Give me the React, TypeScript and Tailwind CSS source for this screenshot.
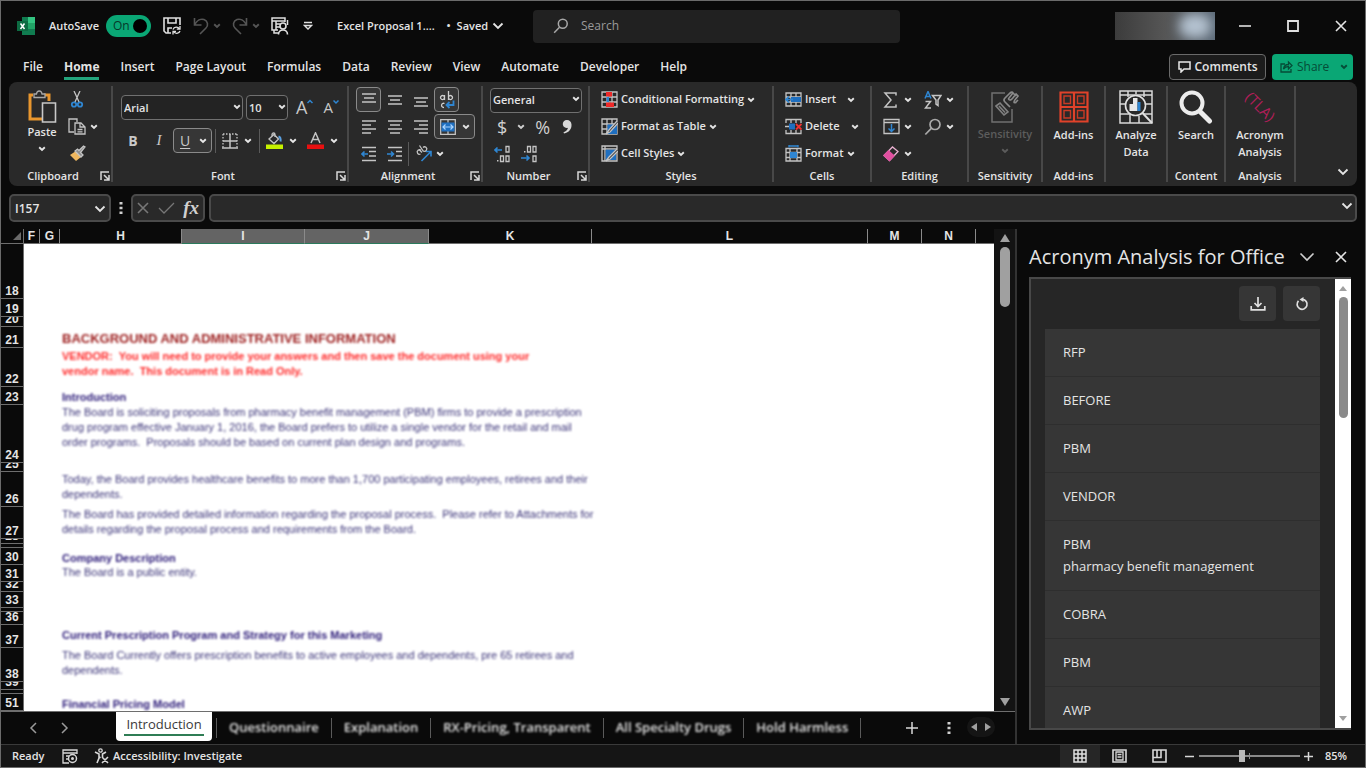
import type { ReactNode } from 'react';

const TABS = ['File', 'Home', 'Insert', 'Page Layout', 'Formulas', 'Data', 'Review', 'View', 'Automate', 'Developer', 'Help'];

const COLUMNS = [
  { name: 'F', width: 'w-[16px]' },
  { name: 'G', width: 'w-[20px]' },
  { name: 'H', width: 'w-[122px]' },
  { name: 'I', width: 'w-[123px]', selected: true },
  { name: 'J', width: 'w-[124px]', selected: true },
  { name: 'K', width: 'w-[163px]' },
  { name: 'L', width: 'w-[276px]' },
  { name: 'M', width: 'w-[54px]' },
  { name: 'N', width: 'w-[54px]' },
  { name: '', width: '' },
];

const TITLE = 'text-[13px] leading-[20px] pt-0.5 font-bold text-[#9c1c1c]';
const WARNING = 'text-[11px] leading-[15px] pt-px font-bold text-[#ff2a2a]';
const HEADING = 'text-[11px] leading-[18px] pt-px font-bold text-[#2b1a78]';
const BODY = 'text-[11px] leading-[15px] font-normal text-[#3a3378]';

type SheetRow = { n: string; height: string; style?: string; lines?: string[] };

const ROWS: SheetRow[] = [
  { n: '18', height: 'h-[55px]' },
  { n: '19', height: 'h-[18px]' },
  { n: '20', height: 'h-[10px]' },
  { n: '21', height: 'h-[21px]', style: TITLE, lines: ['BACKGROUND AND ADMINISTRATIVE INFORMATION'] },
  {
    n: '22',
    height: 'h-[39px]',
    style: WARNING,
    lines: [
      'VENDOR:  You will need to provide your answers and then save the document using your',
      'vendor name.  This document is in Read Only.',
    ],
  },
  { n: '23', height: 'h-[18px]', style: HEADING, lines: ['Introduction'] },
  {
    n: '24',
    height: 'h-[58px]',
    style: BODY,
    lines: [
      'The Board is soliciting proposals from pharmacy benefit management (PBM) firms to provide a prescription',
      'drug program effective January 1, 2016, the Board prefers to utilize a single vendor for the retail and mail',
      'order programs.  Proposals should be based on current plan design and programs.',
    ],
  },
  { n: '25', height: 'h-[9px]' },
  {
    n: '26',
    height: 'h-[35px]',
    style: BODY,
    lines: [
      'Today, the Board provides healthcare benefits to more than 1,700 participating employees, retirees and their',
      'dependents.',
    ],
  },
  {
    n: '27',
    height: 'h-[32px]',
    style: BODY,
    lines: [
      'The Board has provided detailed information regarding the proposal process.  Please refer to Attachments for',
      'details regarding the proposal process and requirements from the Board.',
    ],
  },
  { n: '28', height: 'h-[5px]' },
  { n: '29', height: 'h-[4px]' },
  { n: '30', height: 'h-[17px]', style: HEADING, lines: ['Company Description'] },
  { n: '31', height: 'h-[17px]', style: BODY, lines: ['The Board is a public entity.'] },
  { n: '32', height: 'h-[10px]' },
  { n: '33', height: 'h-[16px]' },
  { n: '34', height: 'h-[4px]' },
  { n: '36', height: 'h-[13px]' },
  { n: '37', height: 'h-[23px]', style: HEADING, lines: ['Current Prescription Program and Strategy for this Marketing'] },
  {
    n: '38',
    height: 'h-[34px]',
    style: BODY,
    lines: [
      'The Board Currently offers prescription benefits to active employees and dependents, pre 65 retirees and',
      'dependents.',
    ],
  },
  { n: '39', height: 'h-[8px]' },
  { n: '40', height: 'h-[4px]' },
  { n: '51', height: 'h-[17px]', style: HEADING, lines: ['Financial Pricing Model'] },
];

const SHEETS = ['Questionnaire', 'Explanation', 'RX-Pricing, Transparent', 'All Specialty Drugs', 'Hold Harmless'];

const ACRONYMS = [
  { term: 'RFP' },
  { term: 'BEFORE' },
  { term: 'PBM' },
  { term: 'VENDOR' },
  { term: 'PBM', meaning: 'pharmacy benefit management' },
  { term: 'COBRA' },
  { term: 'PBM' },
  { term: 'AWP' },
];

function Svg({ w, h = w, className = '', children }: { w: number; h?: number; className?: string; children: ReactNode }) {
  return (
    <svg width={w} height={h} viewBox={`0 0 ${w} ${h}`} fill="none" stroke="#c4c4c4" strokeWidth="1.3" className={`shrink-0 ${className}`} aria-hidden="true">
      {children}
    </svg>
  );
}

function Chevron({ className = '' }: { className?: string }) {
  return (
    <Svg w={8} h={6} className={className}>
      <path d="M1.2 1.3 4 4l2.8-2.7" stroke="currentColor" strokeWidth="1.9" />
    </Svg>
  );
}

function BigChevron({ className = '' }: { className?: string }) {
  return (
    <Svg w={12} h={8} className={className}>
      <path d="m1.5 1.5 4.5 4.5 4.5-4.5" stroke="currentColor" strokeWidth="1.8" />
    </Svg>
  );
}

function Close({ className = '' }: { className?: string }) {
  return (
    <Svg w={12} className={className}>
      <path d="m1 1 10 10M11 1 1 11" stroke="currentColor" strokeWidth="1.6" />
    </Svg>
  );
}

function Dots() {
  return (
    <Svg w={4} h={14}>
      <path d="M0.5 1h3v2.4h-3zM0.5 5.8h3v2.4h-3zM0.5 10.6h3V13h-3z" fill="#d0d0d0" stroke="none" />
    </Svg>
  );
}

function Magnifier({ size = 18 }: { size?: number }) {
  return (
    <svg width={size} height={size} viewBox="0 0 18 18" fill="none" stroke="#a8a8a8" strokeWidth="1.7" className="shrink-0" aria-hidden="true">
      <circle cx="11" cy="6.5" r="5" />
      <path d="m7.3 10.3-6 6.2" />
    </svg>
  );
}

function Launcher({ label }: { label: string }) {
  return (
    <button aria-label={label} className="absolute right-px top-1">
      <Svg w={10}>
        <path d="M1 9V1h8M4 4l4.5 4.5M9 4v5H4" stroke="#d8d8d8" strokeWidth="1.5" />
      </Svg>
    </button>
  );
}

type GroupProps = { label: string; width: string; inset?: string; launcher?: boolean; children: ReactNode };

function Group({ label, width, inset = '', launcher, children }: GroupProps) {
  return (
    <section aria-label={label || undefined} className={`my-1 flex shrink-0 flex-col border-r-2 border-[#484848] ${width}`}>
      <div className={`h-[81px] ${inset}`}>{children}</div>
      <div className={`relative h-[15px] text-center text-[11px] leading-[17px] ${launcher ? 'pr-3.5' : ''}`}>
        {label}
        {launcher && <Launcher label={`${label} settings`} />}
      </div>
    </section>
  );
}

function IconButton({ label, className = '', children }: { label: string; className?: string; children: ReactNode }) {
  return (
    <button aria-label={label} className={`flex items-center justify-center ${className}`}>
      {children}
    </button>
  );
}

function BigButton({ lines, icon }: { lines: string[]; icon: ReactNode }) {
  return (
    <button className="flex w-full flex-col items-center pt-0.5">
      <span className="flex h-[38px] items-center">{icon}</span>
      {lines.map((l) => (
        <span key={l} className="text-[11px] leading-[17px]">
          {l}
        </span>
      ))}
    </button>
  );
}

function Picker({ label, value, className }: { label: string; value: string; className: string }) {
  return (
    <div className={`relative ${className}`}>
      <select aria-label={label} className="h-[25px] w-full appearance-none rounded-[4px] border border-[#707070] bg-[#232323] pl-0.5 text-[11px]">
        <option>{value}</option>
      </select>
      <Chevron className="pointer-events-none absolute right-0.5 top-[10px]" />
    </div>
  );
}

function Lines({ rows }: { rows: [number, number, number][] }) {
  return (
    <Svg w={16}>
      {rows.map(([x1, x2, y]) => (
        <path key={y} d={`M${x1} ${y}H${x2}`} strokeWidth="1.5" />
      ))}
    </Svg>
  );
}

function TableIcon({ children }: { children: ReactNode }) {
  return (
    <Svg w={17}>
      <path d="M1 1h15v15H1zM1 6h15M1 11h15M6 1v15M11 1v15" />
      {children}
    </Svg>
  );
}

function TitleBar() {
  return (
    <header className="flex h-[50px] shrink-0 items-center pl-4 text-[11px]">
      <Svg w={18}>
        <path d="M5 0h13v18H5z" fill="#107c50" stroke="none" />
        <path d="M11 0h7v6h-7z" fill="#33c481" stroke="none" />
        <path d="M11 6h7v6h-7z" fill="#21a366" stroke="none" />
        <path d="M0 4h11v10H0z" fill="#0d6b42" stroke="none" />
        <path d="m3.5 6.5 4 5.5M7.500 6.500l-4 5.500" stroke="#fff" strokeWidth="1.5" />
      </Svg>
      <label className="ml-3.5 flex items-center">
        <span className="w-[57px]">AutoSave</span>
        <input type="checkbox" defaultChecked className="peer sr-only" />
        <span className="flex h-[22px] w-[45px] items-center justify-between rounded-full bg-[#0aa775] pl-[7px] pr-1 text-[12px] font-normal text-[#06382a]">
          On
          <span className="h-[14px] w-[14px] rounded-full bg-black" />
        </span>
      </label>
      <IconButton label="Save" className="ml-3">
        <Svg w={18}>
          <path d="M8 16H3l-2-2V1h16v7M5 1v5h8V1M5 16v-5h4" stroke="#e0e0e0" strokeWidth="1.6" />
          <path d="M10 12.5c1-3 5-3 6.5-.5M17 9v3.200h-3.200M17 14c-1 3-5 3-6.500.5M10 17.500v-3h3" stroke="#e0e0e0" />
        </Svg>
      </IconButton>
      <IconButton label="Undo" className="ml-3 gap-1 text-[#555]">
        <Svg w={16} h={18}>
          <path d="M1.500 1v7h7M1.500 8C4 3 8 1.500 11 2.500c4 1.500 4.500 6 2 8.500l-6 6" stroke="#555" strokeWidth="1.600" />
        </Svg>
        <Chevron />
      </IconButton>
      <IconButton label="Redo" className="ml-[11px] gap-1 text-[#555]">
        <Svg w={16} h={18}>
          <path d="M14.500 1v7h-7M14.500 8C12 3 8 1.500 5 2.500c-4 1.500-4.500 6-2 8.500l6 6" stroke="#555" strokeWidth="1.600" />
        </Svg>
        <Chevron />
      </IconButton>
      <IconButton label="Print preview" className="ml-[11px]">
        <Svg w={18}>
          <path d="M7 13H1V1h13v4M3 13v3h5M1 4h13M5 4v9M5 7h4M5 10h4M16.500 8V3" stroke="#e0e0e0" strokeWidth="1.5" />
          <circle cx="12" cy="9" r="3" fill="#0a0a0a" stroke="#e0e0e0" strokeWidth="1.600" />
          <path d="M7.500 17.500c0-6 9-6 9 0" fill="#0a0a0a" stroke="#e0e0e0" strokeWidth="1.600" />
        </Svg>
      </IconButton>
      <IconButton label="Customize toolbar" className="ml-3.5">
        <Svg w={10}>
          <path d="M1 1.5h8" stroke="#e0e0e0" strokeWidth="1.5" />
          <path d="M1.5 4.5h7L5 8z" stroke="#e0e0e0" />
        </Svg>
      </IconButton>
      <button className="ml-6 flex w-[196px] items-center whitespace-pre">
        Excel Proposal 1....{'  '}
        <span className="px-1.5">•</span>Saved
        <BigChevron className="ml-1" />
      </button>
      <label className="flex h-[33px] w-[367px] items-center gap-3 rounded-[4px] bg-[#212121] pl-5">
        <Magnifier size={16} />
        <input type="search" aria-label="Search" placeholder="Search" className="w-full bg-transparent text-[12px] font-medium outline-none placeholder:text-[#9a9a9a]" />
      </label>
      <div className="ml-auto flex h-7 w-[100px] items-center justify-end overflow-hidden bg-linear-to-r from-[#3c3c3c] via-[#565656] to-[#5c6a78]">
        <div className="h-6 w-8 mr-1 rounded-full bg-[#b4c2d0] blur-[6px]" />
      </div>
      <div className="flex w-[150px] items-center justify-between pl-6 pr-[18px]">
        <IconButton label="Minimize">
          <Svg w={12}>
            <path d="M0 6h12" stroke="#e0e0e0" strokeWidth="1.600" />
          </Svg>
        </IconButton>
        <IconButton label="Maximize">
          <Svg w={12}>
            <path d="M1 1h10v10H1z" stroke="#e0e0e0" strokeWidth="1.800" />
          </Svg>
        </IconButton>
        <IconButton label="Close">
          <Close />
        </IconButton>
      </div>
    </header>
  );
}

function RibbonTabs() {
  return (
    <nav className="flex h-[31px] shrink-0 items-center pl-[22px] pr-3 text-[12px]">
      <div className="flex gap-[21px]">
        {TABS.map((tab) => (
          <a key={tab} href="#" className={`border-b-[3px] pt-1 leading-[20px] ${tab === 'Home' ? 'border-[#23a47c] font-bold' : 'border-transparent'}`}>
            {tab}
          </a>
        ))}
      </div>
      <button className="ml-auto flex h-[26px] w-[97px] items-center justify-center gap-1 rounded-[4px] border border-[#6a6a6a] bg-[#1c1c1c]">
        <Svg w={13} h={12}>
          <path d="M1 1h11v7H6l-3 3V8H1z" stroke="#e8e8e8" strokeWidth="1.5" />
        </Svg>
        Comments
      </button>
      <button className="ml-1.5 flex h-[26px] w-[81px] items-center gap-1 rounded-[4px] bg-[#0aa775] pl-2 font-normal text-[#064c37]">
        <Svg w={13}>
          <path d="M5 4H1v8h10V9M3.500 9C4 5.500 6 4.500 8.500 4.500V2L12 5.500 8.500 9V6.500C6.500 6.500 5 7 3.500 9z" stroke="#064c37" />
        </Svg>
        Share
        <Chevron className="ml-auto mr-[5px]" />
      </button>
    </nav>
  );
}

function ClipboardGroup() {
  return (
    <Group label="Clipboard" width="w-[104px]" launcher>
      <div className="flex">
        <button className="ml-[17px] flex w-8 flex-col items-center pt-1 text-[11px]">
          <Svg w={30} h={34}>
            <path d="M6 5H3v24h12M17 5h5v6" stroke="#e8962e" strokeWidth="3" />
            <path d="M7 7.500V4h2.500c.5-4 5-4 5.500 0h3v3.500z" fill="#292929" stroke="#a8a8a8" />
            <path d="M15.500 13h13v19h-13z" fill="#292929" stroke="#c8c8c8" strokeWidth="1.600" />
          </Svg>
          <span className="leading-[16px]">Paste</span>
          <Chevron className="mt-1.5" />
        </button>
        <div className="ml-2.5 flex flex-col items-start">
          <IconButton label="Cut" className="h-[27px] w-[18px]">
            <Svg w={14} h={17}>
              <path d="m4 0 5.500 12M10 0 4.500 12" />
              <circle cx="4" cy="13.500" r="2.200" stroke="#2f86d2" strokeWidth="1.800" />
              <circle cx="10" cy="13.500" r="2.200" stroke="#2f86d2" strokeWidth="1.800" />
            </Svg>
          </IconButton>
          <IconButton label="Copy" className="h-[27px] gap-1">
            <Svg w={18} h={17}>
              <path d="M6 14H1V1h8v3M7 5h6l4 4v7H7zM12 5v4h5M9.500 11.500h5M9.500 13.800h5" />
            </Svg>
            <Chevron />
          </IconButton>
          <IconButton label="Format painter" className="h-[27px] w-[18px]">
            <Svg w={17}>
              <path d="M1 10 7 6l5 6-5 4z" fill="#f0b860" stroke="none" />
              <path d="m6 6 6 6 2-2-2.500-2.500L16 2l-1.500-1L10 5.500 8.500 4z" fill="#8a8a8a" />
            </Svg>
          </IconButton>
        </div>
      </div>
    </Group>
  );
}

function FontGroup() {
  return (
    <Group label="Font" width="w-[236px]" inset="pl-2" launcher>
      <div className="flex h-[42px] items-center pr-2">
        <Picker label="Font" value="Arial" className="w-[122px]" />
        <Picker label="Font size" value="10" className="ml-[3px] w-[42px]" />
        <IconButton label="Grow font" className="ml-2 text-[18px] font-normal leading-none text-[#c8c8c8]">
          A
          <Svg w={6} h={18}>
            <path d="m.5 5 2.500-2.500L5.500 5" stroke="#2f86d2" strokeWidth="1.500" />
          </Svg>
        </IconButton>
        <IconButton label="Shrink font" className="ml-2.5 text-[15px] font-normal leading-none text-[#c8c8c8]">
          A
          <Svg w={6} h={18}>
            <path d="m.5 2.500 2.500 2.500 2.500-2.500" stroke="#2f86d2" strokeWidth="1.500" />
          </Svg>
        </IconButton>
      </div>
      <div className="flex h-[25px] items-center text-[#c8c8c8]">
        <button aria-label="Bold" className="w-6 text-[14px] font-bold">
          B
        </button>
        <button aria-label="Italic" className="w-7 font-['Liberation_Serif',serif] text-[15px] font-normal italic">
          I
        </button>
        <button aria-label="Underline" className="flex h-[25px] w-[39px] items-center justify-between rounded-[4px] border border-[#8a8a8a] bg-[#363636] pl-1.5 pr-1 text-[14px] font-normal">
          <span className="underline underline-offset-2">U</span>
          <Chevron className="text-[#e8e8e8]" />
        </button>
        <div className="ml-[3px] h-6 w-px bg-[#5a5a5a]" />
        <IconButton label="Borders" className="ml-1.5 gap-1.5">
          <Svg w={16}>
            <path d="M1 1h14M1 1v14M15 1v14" strokeDasharray="1.500 1.500" />
            <path d="M1 8h14M8 1v14M0 15h16" strokeWidth="1.500" />
          </Svg>
          <Chevron className="text-[#e8e8e8]" />
        </IconButton>
        <div className="ml-[7px] h-6 w-px bg-[#5a5a5a]" />
        <IconButton label="Fill color" className="ml-1.5 gap-1.5">
          <Svg w={17}>
            <path d="m3 7 5-4.500L12.500 7 8 11.500zM6 5V2.500C6 .5 9 .5 9 2.500V5" />
            <path d="M12.500 4.500c1.500.5 2.500 2 2 5" stroke="#5aa0e0" strokeWidth="2" />
            <path d="M0 12.500h17V17H0z" fill="#c6f000" stroke="none" />
          </Svg>
          <Chevron className="text-[#e8e8e8]" />
        </IconButton>
        <IconButton label="Font color" className="ml-2.5 gap-1.5">
          <Svg w={17}>
            <path d="M4 11 8.500.8 13 11M5.500 7.500h6" strokeWidth="1.500" />
            <path d="M0 12.500h17V17H0z" fill="#e81010" stroke="none" />
          </Svg>
          <Chevron className="text-[#e8e8e8]" />
        </IconButton>
      </div>
    </Group>
  );
}

function AlignmentGroup() {
  return (
    <Group label="Alignment" width="w-[134px]" inset="pl-[7px]" launcher>
      <div className="flex h-[27px] items-center">
        <IconButton label="Top align" className="h-[25px] w-[25px] rounded-[4px] border border-[#8a8a8a] bg-[#363636]">
          <Lines rows={[[1, 15, 2], [3, 13, 6], [1, 15, 10]]} />
        </IconButton>
        <IconButton label="Middle align" className="h-[27px] w-[27px]">
          <Lines rows={[[1, 15, 4], [3, 13, 8], [1, 15, 12]]} />
        </IconButton>
        <IconButton label="Bottom align" className="h-[27px] w-[26px]">
          <Lines rows={[[1, 15, 6], [3, 13, 10], [1, 15, 14]]} />
        </IconButton>
        <IconButton label="Wrap text" className="h-[25px] w-[25px] rounded-[4px] border border-[#8a8a8a] bg-[#363636]">
          <Svg w={18}>
            <path d="M6.500 4v5M6.500 6.500a2 2 0 1 0 0 .1M10.500 0v9M10.500 6.500a2 2 0 1 1 0 .1M6.500 12.500c-3-1.500-4.500 4-.5 4" stroke="#d0d0d0" />
            <path d="M15.500 9.500v4.500H9M11.500 11 8.500 14l3 3" stroke="#2f86d2" strokeWidth="1.800" />
          </Svg>
        </IconButton>
      </div>
      <div className="flex h-[27px] items-center">
        <IconButton label="Align left" className="w-[25px]">
          <Lines rows={[[1, 15, 2], [1, 10, 6], [1, 15, 10], [1, 10, 14]]} />
        </IconButton>
        <IconButton label="Center" className="w-[27px]">
          <Lines rows={[[1, 15, 2], [3, 13, 6], [1, 15, 10], [3, 13, 14]]} />
        </IconButton>
        <IconButton label="Align right" className="w-[26px]">
          <Lines rows={[[1, 15, 2], [6, 15, 6], [1, 15, 10], [6, 15, 14]]} />
        </IconButton>
        <IconButton label="Merge and center" className="h-[25px] w-[41px] gap-1.5 rounded-[4px] border border-[#8a8a8a] bg-[#363636]">
          <Svg w={16}>
            <path d="M.7.700h14.600v14.600H.700zM8 .7v3M8 12v3" />
            <path d="M1.500 3.500h13v9h-13z" fill="#1f6fc0" stroke="none" />
            <path d="M3 8h10M5.500 5.500 3 8l2.500 2.500M10.500 5.500 13 8l-2.500 2.500" stroke="#a8d4ff" strokeWidth="1.200" />
          </Svg>
          <Chevron />
        </IconButton>
      </div>
      <div className="flex h-[27px] items-center">
        <IconButton label="Decrease indent" className="w-[25px]">
          <Svg w={16}>
            <path d="M1 1.500h14M8 5.500h7M8 10h7M1 14.500h14" strokeWidth="1.500" />
            <path d="M7 8H1M3.500 5.500 1 8l2.500 2.500" stroke="#2f86d2" strokeWidth="1.600" />
          </Svg>
        </IconButton>
        <IconButton label="Increase indent" className="w-[27px]">
          <Svg w={16}>
            <path d="M1 1.500h14M9 5.500h6M9 10h6M1 14.500h14" strokeWidth="1.500" />
            <path d="M0 8h6.500M4 5.500 6.500 8 4 10.500" stroke="#2f86d2" strokeWidth="1.600" />
          </Svg>
        </IconButton>
        <div className="h-6 w-px bg-[#5a5a5a]" />
        <IconButton label="Orientation" className="ml-1.5 gap-1">
          <Svg w={17}>
            <path d="M7 7.500 4 4.500M5.500 9a2.200 2.200 0 1 1 .5-3.500M8.500 6.500 4.500.5M8.500 6a2.200 2.200 0 1 0-.5-3.500" stroke="#c4c4c4" />
            <path d="M6.500 16 15.500 7M11 6.500h5v5" stroke="#2f86d2" strokeWidth="1.600" />
          </Svg>
          <Chevron />
        </IconButton>
      </div>
    </Group>
  );
}

function NumberGroup() {
  return (
    <Group label="Number" width="w-[107px]" inset="pl-[7px]" launcher>
      <div className="flex h-[27px] items-center">
        <Picker label="Number format" value="General" className="w-[92px]" />
      </div>
      <div className="flex h-[27px] items-center text-[18px] font-normal leading-none text-[#d0d0d0]">
        <IconButton label="Accounting format" className="ml-[7px] gap-2.5">
          $<Chevron />
        </IconButton>
        <button aria-label="Percent style" className="ml-2.5">
          %
        </button>
        <IconButton label="Comma style" className="ml-3">
          <Svg w={11} h={15}>
            <path d="M5 1a4 4 0 1 0 1 7.800C5.500 11 4 12.500 1.500 13.200l.5 1.300C7 13.500 9.800 10 9.500 5.500 9.300 2.500 7.500 1 5 1z" fill="#d8d8d8" stroke="none" />
          </Svg>
        </IconButton>
      </div>
      <div className="flex h-[27px] items-center gap-2.5 pl-1">
        <IconButton label="Increase decimal">
          <Svg w={17} h={18}>
            <path d="M8 5H1M3.500 2.500 1 5l2.500 2.500" stroke="#2f86d2" strokeWidth="1.600" />
            <path d="M12 1.500h3V7h-3zM6.500 11h3v5.500h-3zM12 11h3v5.500h-3z" />
            <path d="M3 15h1.500v1.500H3z" fill="#c4c4c4" stroke="none" />
          </Svg>
        </IconButton>
        <IconButton label="Decrease decimal">
          <Svg w={17} h={18}>
            <path d="M0 13h8M5.500 10.500 8 13l-2.500 2.500" stroke="#2f86d2" strokeWidth="1.600" />
            <path d="M6.500 1.500h3V7h-3zM12 1.500h3V7h-3zM12 11h3v5.500h-3z" />
            <path d="M3 6h1.500v1.500H3z" fill="#c4c4c4" stroke="none" />
          </Svg>
        </IconButton>
      </div>
    </Group>
  );
}

function StylesGroup() {
  return (
    <Group label="Styles" width="w-[184px]" inset="pl-[11px]">
      <button className="flex h-[27px] items-center gap-[3px] text-[11px]">
        <TableIcon>
          <path d="M5 1h6v4.500H5zM5 11.500h8V16H5z" fill="#ee2a2a" stroke="none" />
          <path d="M5.500 6H8v5H5.500z" fill="#2f86d2" stroke="none" />
        </TableIcon>
        Conditional Formatting
        <Chevron />
      </button>
      <button className="flex h-[27px] items-center gap-[3px] text-[11px]">
        <TableIcon>
          <path d="M6.500 6.500H16V16H6.500z" fill="#1f6fc0" stroke="none" />
          <path d="m16 3-8 9-3 4 4-2 8-9" fill="#292929" />
        </TableIcon>
        Format as Table
        <Chevron />
      </button>
      <button className="flex h-[27px] items-center gap-[3px] text-[11px]">
        <Svg w={17}>
          <path d="M1 1h15v15H1zM1 4h15M4 1v15" />
          <path d="M4.700 4.700H15V15H4.700z" fill="#1f6fc0" stroke="none" />
          <path d="m16 4-8 8-3 4 4-2 8-8" fill="#292929" />
        </Svg>
        Cell Styles
        <Chevron />
      </button>
    </Group>
  );
}

function CellsGroup() {
  return (
    <Group label="Cells" width="w-[98px]" inset="pl-[11px]">
      <button className="flex h-[27px] w-[70px] items-center gap-[3px] text-[11px]">
        <Svg w={17}>
          <path d="M1 2h15v13H1zM1 6h15M1 11h15M6 2v13M11 2v13" />
          <path d="M6 6h10v5H6z" fill="#1f6fc0" stroke="none" />
          <path d="M8 8.500H1M4 5.500l-3 3 3 3" stroke="#2f86d2" strokeWidth="1.600" />
        </Svg>
        Insert
        <Chevron className="ml-auto" />
      </button>
      <button className="flex h-[27px] w-[74px] items-center gap-[3px] text-[11px]">
        <Svg w={17}>
          <path d="M1 5V1.500h15V5M6 1.500V5M11 1.500V5M1 12v3.500h15V12M6 15.500V12M11 15.500V12M0 8.500h4" />
          <path d="M4 5.500h6v6H4z" fill="#1f6fc0" stroke="none" />
          <path d="m11 6 5.500 5.500M16.500 6 11 11.500" stroke="#ee3030" strokeWidth="1.800" />
        </Svg>
        Delete
        <Chevron className="ml-auto" />
      </button>
      <button className="flex h-[27px] w-[70px] items-center gap-[3px] text-[11px]">
        <Svg w={17}>
          <path d="M1 3.500h15V16H1zM1 7.500h15M1 12.500h15M5 3.500V16M12 3.500V16" />
          <path d="M5 7h7v6H5z" fill="#2f86d2" stroke="none" />
          <path d="M4 1h9M4 0v2.500M13 0v2.500" stroke="#2f86d2" />
        </Svg>
        Format
        <Chevron className="ml-auto" />
      </button>
    </Group>
  );
}

function EditingGroup() {
  return (
    <Group label="Editing" width="w-[97px]" inset="pl-[11px]">
      <div className="flex h-[27px] items-center gap-3">
        <IconButton label="AutoSum" className="gap-1.5">
          <Svg w={15} h={16}>
            <path d="M13 3.500V1H2l6 7-6 7h11v-2.500" strokeWidth="1.500" />
          </Svg>
          <Chevron />
        </IconButton>
        <IconButton label="Sort and filter" className="gap-1">
          <Svg w={18}>
            <path d="m1 7.500 3-7 3 7M2 5.500h4" stroke="#2f86d2" strokeWidth="1.500" />
            <path d="M1.500 10.500h5L1.500 17H7" strokeWidth="1.500" />
            <path d="M8.500 4.500H17L14 9v5.500l-2-1.500V9z" strokeWidth="1.500" />
          </Svg>
          <Chevron />
        </IconButton>
      </div>
      <div className="flex h-[27px] items-center gap-3">
        <IconButton label="Fill" className="gap-1">
          <Svg w={17}>
            <path d="M1 1.500h15v14H1zM1 4.500h15" />
            <path d="M8.500 6v7M5.500 10.500l3 3 3-3" stroke="#2f86d2" strokeWidth="1.500" />
          </Svg>
          <Chevron />
        </IconButton>
        <IconButton label="Find and select" className="gap-1">
          <Magnifier size={18} />
          <Chevron />
        </IconButton>
      </div>
      <div className="flex h-[27px] items-center">
        <IconButton label="Clear" className="gap-1">
          <Svg w={17}>
            <path d="M1 10.500 9.500 2l5.500 4.500L6.500 15.500z" stroke="#e8b0d0" />
            <path d="m1 10.500 4.500-4.700 5.500 5-4.500 4.700z" fill="#e050a0" stroke="#e050a0" />
          </Svg>
          <Chevron />
        </IconButton>
      </div>
    </Group>
  );
}

function Ribbon() {
  return (
    <div className="mx-2 flex h-[104px] shrink-0 rounded-[8px] bg-[#292929]">
      <ClipboardGroup />
      <FontGroup />
      <AlignmentGroup />
      <NumberGroup />
      <StylesGroup />
      <CellsGroup />
      <EditingGroup />
      <Group label="Sensitivity" width="w-[74px]">
        <button disabled className="flex w-full flex-col items-center pt-0.5 text-[11px] text-[#5c5c5c]">
          <Svg w={30} h={38}>
            <path d="M15 5H2v29h20V21" stroke="#707070" strokeWidth="1.500" />
            <path d="m6 18 4-3 8 9-4 3zM9 18l6 6.500" stroke="#808080" strokeWidth="1.600" />
            <path d="M20 19l-5-5c-2-2-1-3 0-4l4-4c1-1 3-3 4-1l-4 5c-1 1 0 2 1 2 2 0 4-4 6-6l2 2c-2 3-4 4-4 6 0 1 2 1 2 0l2-2M22 4l4 4" stroke="#8a8a8a" strokeWidth="1.700" />
          </Svg>
          <span className="leading-[16px]">Sensitivity</span>
          <Chevron className="mt-1.5" />
        </button>
      </Group>
      <Group label="Add-ins" width="w-[63px]">
        <BigButton
          lines={['Add-ins']}
          icon={
            <Svg w={30} h={32}>
              <path d="M1.500 1.500h27v29h-27zM15 1.500v29M1.500 16h27" stroke="#e0422a" strokeWidth="2.200" />
              <path d="M5 5h6.500v7.500H5zM18.500 5H25v7.500h-6.500zM5 19.500h6.500V27H5zM18.500 19.500H25V27h-6.500z" stroke="#c83a25" strokeWidth="1.400" />
            </Svg>
          }
        />
      </Group>
      <Group label="" width="w-[62px]">
        <BigButton
          lines={['Analyze', 'Data']}
          icon={
            <Svg w={34}>
              <path d="M1 1h32v32H1zM1 5h32M1 14h7M26 14h7M1 24h10M24 24h9M9 1v6M17 1v3M25 1v6M11 25v8M20 26v7" stroke="#d8d8d8" strokeWidth="1.500" />
              <circle cx="16.500" cy="15.500" r="10" fill="#292929" stroke="#e0e0e0" strokeWidth="1.600" />
              <path d="M10.500 14H14v7h-3.500zM14 8h4.500v13H14z" fill="#e8e8e8" stroke="none" />
              <path d="M18.500 12h3v9h-3z" fill="#2f86d2" stroke="none" />
              <path d="m23.500 23 9.500 10" stroke="#e0e0e0" strokeWidth="2" />
            </Svg>
          }
        />
      </Group>
      <Group label="Content" width="w-[58px]">
        <BigButton
          lines={['Search']}
          icon={
            <Svg w={34}>
              <circle cx="13" cy="13" r="10.500" stroke="#ececec" strokeWidth="4" />
              <path d="m21.500 22 9 9" stroke="#ececec" strokeWidth="5" strokeLinecap="round" />
            </Svg>
          }
        />
      </Group>
      <Group label="Analysis" width="w-[70px]">
        <BigButton
          lines={['Acronym', 'Analysis']}
          icon={
            <Svg w={36} className="overflow-visible">
              <text x="18" y="23" textAnchor="middle" transform="rotate(45 18 18)" fontSize="15" fontWeight="500" fill="#b01e58" stroke="none">
                (TLA)
              </text>
            </Svg>
          }
        />
      </Group>
      <IconButton label="Collapse ribbon" className="mb-2.5 ml-auto mr-2 self-end">
        <BigChevron />
      </IconButton>
    </div>
  );
}

function FormulaBar() {
  return (
    <div className="flex h-[43px] shrink-0 items-start px-2 pt-2">
      <div className="relative w-[102px]">
        <input aria-label="Name box" defaultValue="I157" className="h-7 w-full rounded-[5px] border-2 border-[#4a4a4a] bg-[#292929] pl-1 text-[12px]" />
        <BigChevron className="pointer-events-none absolute right-[5px] top-[11px]" />
      </div>
      <span className="flex h-7 w-5 items-center justify-center">
        <Dots />
      </span>
      <div className="flex h-7 w-[74px] items-center justify-between rounded-[5px] border-2 border-[#4a4a4a] bg-[#292929] px-1">
        <IconButton label="Cancel">
          <Close className="text-[#777]" />
        </IconButton>
        <IconButton label="Enter">
          <Svg w={17} h={12}>
            <path d="m1 6 5 5L16 1" stroke="#777" />
          </Svg>
        </IconButton>
        <button aria-label="Insert function" className="font-['Liberation_Serif',serif] text-[19px] font-bold italic leading-[22px] text-[#d0d0d0]">
          fx
        </button>
      </div>
      <div className="relative ml-1 flex-1">
        <input aria-label="Formula" className="h-7 w-full rounded-[5px] border-2 border-[#4a4a4a] bg-[#292929] px-2 text-[12px]" />
        <BigChevron className="pointer-events-none absolute right-1 top-2" />
      </div>
    </div>
  );
}

function Grid() {
  return (
    <div className="min-w-0 flex-1 overflow-hidden">
      <table className="w-full table-fixed border-separate border-spacing-0 font-['Liberation_Sans',Arial,sans-serif]">
        <thead>
          <tr className="text-[12px] leading-[14px]">
            <th className="h-[15px] w-[23px] border-b border-r border-[#6e6e6e] p-0">
              <Svg w={8} className="ml-auto mr-0.5">
                <path d="M8 0v8H0z" fill="#6a6a6a" stroke="none" />
              </Svg>
            </th>
            {COLUMNS.map((c, i) => (
              <th
                key={c.name}
                scope="col"
                className={`border-b p-0 ${c.width} ${c.selected ? 'border-b-[#2b7a5c] bg-[#646464]' : 'border-b-[#6e6e6e]'} ${i < COLUMNS.length - 1 ? 'border-r border-r-[#8a8a8a]' : ''}`}
              >
                {c.name}
              </th>
            ))}
          </tr>
        </thead>
        <tbody>
          {ROWS.map((row) => (
            <tr key={row.n}>
              <th scope="row" className="border-r border-[#6e6e6e] p-0">
                <div className={`flex items-end justify-center overflow-hidden border-b border-[#6e6e6e] text-[12px] leading-[14px] ${row.height}`}>
                  {row.height !== 'h-[4px]' && row.n}
                </div>
              </th>
              <td colSpan={COLUMNS.length} className="bg-white p-0">
                <div className={`whitespace-pre pl-[38px] ${row.height}`}>
                  <div className={`blur-[1px] ${row.style ?? ''}`}>
                    {row.lines?.map((line) => (
                      <div key={line}>{line}</div>
                    ))}
                  </div>
                </div>
              </td>
            </tr>
          ))}
        </tbody>
      </table>
    </div>
  );
}

function Arrow({ d, className = '' }: { d: string; className?: string }) {
  return (
    <Svg w={10} className={className}>
      <path d={d} fill="#a0a0a0" stroke="none" />
    </Svg>
  );
}

function SheetTabs() {
  return (
    <div className="flex h-[33px] shrink-0 items-start border-t border-[#6e6e6e] text-[13px]">
      <IconButton label="Previous sheet" className="ml-7 h-[31px]">
        <Svg w={8} h={12}>
          <path d="M7 1 2 6l5 5" stroke="#9a9a9a" strokeWidth="1.500" />
        </Svg>
      </IconButton>
      <IconButton label="Next sheet" className="ml-6 h-[31px]">
        <Svg w={8} h={12}>
          <path d="m1 1 5 5-5 5" stroke="#9a9a9a" strokeWidth="1.500" />
        </Svg>
      </IconButton>
      <button className="ml-[47px] h-[29px] w-[96px] rounded-b-[4px] bg-white pb-1 font-normal text-[#3a3a3a]">
        <span className="mx-2 block border-b-2 border-[#2f7d55] leading-[20px]">Introduction</span>
      </button>
      <div className="ml-1 mt-1.5 h-5 w-px bg-[#5a5a5a]" />
      {SHEETS.map((name) => (
        <button key={name} className="mt-1.5 h-5 whitespace-nowrap border-r border-[#5a5a5a] px-3">
          <span className="block blur-[1px]">{name}</span>
        </button>
      ))}
      <IconButton label="New sheet" className="ml-auto h-[31px]">
        <Svg w={12}>
          <path d="M6 0v12M0 6h12" stroke="#d8d8d8" strokeWidth="1.500" />
        </Svg>
      </IconButton>
      <span className="ml-[29px] flex h-8 items-center">
        <Dots />
      </span>
      <div className="ml-4 mr-5 mt-[5px] flex h-5 items-center gap-1 rounded-full bg-[#151515] px-0.5">
        <Arrow d="M8 1v8L2 5z" />
        <Arrow d="M2 1v8l6-4z" />
      </div>
    </div>
  );
}

function TaskPane() {
  return (
    <aside className="flex w-[350px] shrink-0 flex-col border-l-2 border-[#333] pb-3.5 pl-3 pr-3.5">
      <div className="flex h-12 shrink-0 items-center pt-2">
        <h2 className="whitespace-nowrap text-[20px] font-normal">Acronym Analysis for Office</h2>
        <IconButton label="Pane options" className="ml-auto">
          <Svg w={16} h={10}>
            <path d="m1.500 1.500 6.500 6.500 6.500-6.500" stroke="#d0d0d0" strokeWidth="1.600" />
          </Svg>
        </IconButton>
        <IconButton label="Close pane" className="ml-5 mr-1">
          <Close />
        </IconButton>
      </div>
      <div className="flex min-h-0 flex-1 border-2 border-r-0 border-[#484848] bg-[#262626]">
        <div className="min-w-0 flex-1 overflow-hidden pl-3.5 pr-[15px] pt-[7px]">
          <div className="flex justify-end gap-[7px]">
            <IconButton label="Download" className="h-[35px] w-[37px] rounded-[4px] bg-[#363636]">
              <Svg w={16}>
                <path d="M8 1v9M4.500 7 8 10.500 11.500 7M1.200 10v3.800h13.600V10" stroke="#e0e0e0" strokeWidth="1.700" />
              </Svg>
            </IconButton>
            <IconButton label="Refresh" className="h-[35px] w-[37px] rounded-[4px] bg-[#363636]">
              <Svg w={14}>
                <path d="M3.500 3.800a5 5 0 1 0 4-1.500" stroke="#e0e0e0" strokeWidth="1.700" />
                <path d="M8.500 0v5L4.500 2.500z" fill="#e0e0e0" stroke="none" />
              </Svg>
            </IconButton>
          </div>
          <ul className="mt-2 bg-[#363636] text-[13px] font-medium leading-[22px]">
            {ACRONYMS.map((a, i) => (
              <li key={i} className="border-b border-[#2e2e2e] px-[18px] pb-[13px] pt-3">
                <div>{a.term}</div>
                {a.meaning && <div>{a.meaning}</div>}
              </li>
            ))}
          </ul>
        </div>
        <div className="flex w-4 shrink-0 flex-col items-center bg-white py-1">
          <Arrow d="M1 8h8L5 3z" />
          <div className="mt-1 h-[121px] w-[9px] rounded-full bg-[#8a8a8a]" />
          <Arrow d="M1 2h8L5 7z" className="mt-auto" />
        </div>
      </div>
    </aside>
  );
}

function StatusBar() {
  return (
    <footer className="flex h-[23px] shrink-0 items-center border-t border-[#3a3a3a] bg-[#151515] pl-[11px] pr-[18px] text-[11px]">
      <span className="w-[50px]">Ready</span>
      <Svg w={16} h={15}>
        <path d="M7 14H1V1h14v4M1 4h14M4 7h3M4 10h2" stroke="#d8d8d8" />
        <circle cx="10.500" cy="9.500" r="4" stroke="#d8d8d8" strokeWidth="1.500" />
        <circle cx="10.500" cy="9.500" r="1.500" fill="#d8d8d8" stroke="none" />
      </Svg>
      <button className="ml-4 flex items-center gap-1">
        <Svg w={15} h={16}>
          <circle cx="6.500" cy="2.500" r="1.700" stroke="#d8d8d8" />
          <path d="m1 4 4 2v4l-2 5M12 4 8.500 6v3M5 10l1.500-1M8 9l6 6M14 9l-6 6" stroke="#d8d8d8" strokeWidth="1.600" />
        </Svg>
        Accessibility: Investigate
      </button>
      <IconButton label="Normal view" className="ml-auto h-[22px] w-10 bg-[#262626]">
        <Svg w={14}>
          <path d="M1 1h12v12H1zM1 5h12M1 9h12M5 1v12M9 1v12" stroke="#e0e0e0" strokeWidth="1.500" />
        </Svg>
      </IconButton>
      <IconButton label="Page layout view" className="w-10">
        <Svg w={15} h={14}>
          <path d="M1 1h13v12H1z" stroke="#d8d8d8" strokeWidth="1.600" />
          <path d="M4 3h7v8H4zM5.500 5.500h4M5.500 8h4" stroke="#d8d8d8" />
        </Svg>
      </IconButton>
      <IconButton label="Page break view" className="w-10">
        <Svg w={15} h={14}>
          <path d="M1 1h13v12H1zM1 8.500h8V1M5 1v7" stroke="#d8d8d8" strokeWidth="1.600" />
        </Svg>
      </IconButton>
      <IconButton label="Zoom out" className="ml-1">
        <Svg w={11}>
          <path d="M1 5.500h9" stroke="#d8d8d8" strokeWidth="1.500" />
        </Svg>
      </IconButton>
      <div className="relative mx-1 flex w-[101px] items-center">
        <input
          type="range"
          aria-label="Zoom"
          defaultValue={42}
          className="h-3 w-full appearance-none bg-transparent [&::-webkit-slider-runnable-track]:h-0.5 [&::-webkit-slider-runnable-track]:bg-[#8a8a8a] [&::-webkit-slider-thumb]:-mt-[5px] [&::-webkit-slider-thumb]:h-3 [&::-webkit-slider-thumb]:w-1.5 [&::-webkit-slider-thumb]:appearance-none [&::-webkit-slider-thumb]:bg-[#b8b8b8]"
        />
        <span className="absolute left-1/2 top-[3px] h-1.5 w-px bg-[#8a8a8a]" />
      </div>
      <IconButton label="Zoom in">
        <Svg w={9}>
          <path d="M4.500 0v9M0 4.500h9" stroke="#d8d8d8" strokeWidth="1.500" />
        </Svg>
      </IconButton>
      <span className="ml-3">85%</span>
    </footer>
  );
}

export default function App() {
  return (
    <div className="flex h-screen flex-col overflow-hidden border border-[#6b6b6b] bg-[#0a0a0a] font-['Open_Sans','Noto_Sans',sans-serif] font-semibold text-[#e4e4e4]">
      <TitleBar />
      <RibbonTabs />
      <Ribbon />
      <FormulaBar />
      <main className="flex min-h-0 flex-1">
        <div className="flex min-w-0 flex-1 flex-col">
          <div className="flex min-h-0 flex-1">
            <Grid />
            <div className="flex w-[21px] shrink-0 flex-col items-center bg-[#131313] py-1">
              <Arrow d="M0 9h10L5 1z" />
              <div className="mt-1 h-[60px] w-[10px] rounded-full bg-[#a0a0a0]" />
              <Arrow d="M0 1h10L5 9z" className="mt-auto" />
            </div>
          </div>
          <SheetTabs />
        </div>
        <TaskPane />
      </main>
      <StatusBar />
    </div>
  );
}
